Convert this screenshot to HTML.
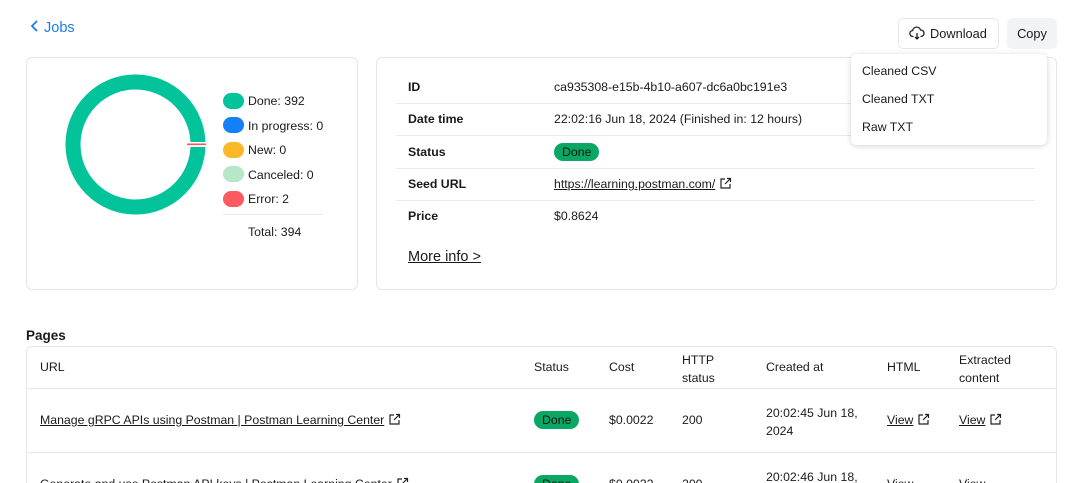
<!DOCTYPE html>
<html><head><style>
*{box-sizing:border-box;margin:0;padding:0}
html,body{width:1080px;height:483px;overflow:hidden}
body{background:#fff;font-family:"Liberation Sans",sans-serif;font-size:12.3px;color:#1a1a1a;position:relative}
.abs{position:absolute}
.card{position:absolute;border:1px solid #e3e6ea;border-radius:6px;background:#fff}
.sw{position:absolute;left:223px;width:21px;height:16px;border-radius:8px}
.lg{position:absolute;left:248px}
.lab{position:absolute;left:408px;font-weight:bold}
.val{position:absolute;left:554px}
.sep{position:absolute;left:396px;width:639px;height:1px;background:#e8ebee}
.badge{display:inline-block;background:#0aa764;color:#111;border-radius:10px;padding:2px 8px;font-size:12.3px}
a{color:#1a1a1a;text-decoration:underline}
.ext{display:inline-block;vertical-align:-2px;margin-left:4px}
.th{position:absolute;font-weight:normal;color:#1a1a1a}
</style></head><body>
<div class="abs" style="left:30px;top:19px;color:#1a7cf0;font-size:14.5px"><svg width="10" height="14" viewBox="0 0 10 14" style="vertical-align:-1px;margin-right:4px"><path d="M7 2L2 7l5 5" fill="none" stroke="#1a7cf0" stroke-width="1.8"/></svg>Jobs</div>

<div class="abs" style="left:898px;top:18px;width:101px;height:31px;border:1px solid #e3e6ea;border-radius:5px;font-size:12.8px;line-height:29px;padding-left:31px">Download</div>
<svg class="abs" style="left:909px;top:26px" width="16" height="15" viewBox="0 0 16 15"><path d="M4.5 10.5H4a3 3 0 0 1-.3-6A4 4 0 0 1 11.5 4a3 3 0 0 1 .5 6.5h-.5M8 7v6M6 11l2 2 2-2" fill="none" stroke="#222" stroke-width="1.3"/></svg>
<div class="abs" style="left:1007px;top:18px;width:50px;height:31px;background:#f1f4f7;border-radius:5px;line-height:31px;text-align:center;font-size:12.8px">Copy</div>

<div class="card" style="left:26px;top:57px;width:332px;height:233px"></div>
<svg class="abs" style="left:65px;top:74px" width="141" height="141" viewBox="0 0 141 141">
<circle cx="70.5" cy="70.5" r="62.5" fill="none" stroke="#03c39b" stroke-width="15"/>
<rect x="122" y="68" width="20" height="5" fill="#fff"/>
<rect x="122" y="69.5" width="20" height="1.6" fill="#f05a5e"/>
</svg>
<div class="sw" style="top:93px;background:#03c39b"></div><div class="lg" style="top:94px">Done: 392</div>
<div class="sw" style="top:117px;background:#1480f7"></div><div class="lg" style="top:119px">In progress: 0</div>
<div class="sw" style="top:142px;background:#fbb828"></div><div class="lg" style="top:143px">New: 0</div>
<div class="sw" style="top:166px;background:#b6e8c8"></div><div class="lg" style="top:168px">Canceled: 0</div>
<div class="sw" style="top:191px;background:#fe5a60"></div><div class="lg" style="top:192px">Error: 2</div>
<div class="abs" style="left:223px;top:214px;width:100px;height:1px;background:#e8ebee"></div>
<div class="abs" style="left:248px;top:225px">Total: 394</div>

<div class="card" style="left:376px;top:57px;width:681px;height:233px"></div>
<div class="lab" style="top:80px">ID</div><div class="val" style="top:80px">ca935308-e15b-4b10-a607-dc6a0bc191e3</div>
<div class="sep" style="top:103px"></div>
<div class="lab" style="top:112px">Date time</div><div class="val" style="top:112px">22:02:16 Jun 18, 2024 (Finished in: 12 hours)</div>
<div class="sep" style="top:135px"></div>
<div class="lab" style="top:145px">Status</div><div class="val" style="top:143px"><span class="badge">Done</span></div>
<div class="sep" style="top:168px"></div>
<div class="lab" style="top:177px">Seed URL</div><div class="val" style="top:177px"><a>https://learning.postman.com/</a><svg class="ext" width="13" height="13" viewBox="0 0 13 13"><path d="M6 2H2v9h9V7M8 1.5h3.5V5M11.5 1.5L6 7" fill="none" stroke="#222" stroke-width="1.2"/></svg></div>
<div class="sep" style="top:200px"></div>
<div class="lab" style="top:209px">Price</div><div class="val" style="top:209px">$0.8624</div>
<div class="abs" style="left:408px;top:249px;font-size:14.5px"><a>More info &gt;</a></div>

<div class="abs" style="left:851px;top:54px;width:196px;height:91px;background:#fff;border-radius:6px;box-shadow:0 1px 6px rgba(0,0,0,.18)"></div>
<div class="abs" style="left:862px;top:64px">Cleaned CSV</div>
<div class="abs" style="left:862px;top:92px">Cleaned TXT</div>
<div class="abs" style="left:862px;top:120px">Raw TXT</div>

<div class="abs" style="left:26px;top:328px;font-weight:bold;font-size:13.5px">Pages</div>
<div class="card" style="left:26px;top:346px;width:1031px;height:160px;border-radius:6px"></div>
<div class="th" style="left:40px;top:360px">URL</div>
<div class="th" style="left:534px;top:360px">Status</div>
<div class="th" style="left:609px;top:360px">Cost</div>
<div class="th" style="left:682px;top:351px;line-height:18px">HTTP<br>status</div>
<div class="th" style="left:766px;top:360px">Created at</div>
<div class="th" style="left:887px;top:360px">HTML</div>
<div class="th" style="left:959px;top:351px;line-height:18px">Extracted<br>content</div>
<div class="abs" style="left:27px;top:388px;width:1029px;height:1px;background:#e3e6ea"></div>
<div class="abs" style="left:40px;top:413px"><a>Manage gRPC APIs using Postman | Postman Learning Center</a><svg class="ext" width="13" height="13" viewBox="0 0 13 13"><path d="M6 2H2v9h9V7M8 1.5h3.5V5M11.5 1.5L6 7" fill="none" stroke="#222" stroke-width="1.2"/></svg></div>
<div class="abs" style="left:534px;top:411px"><span class="badge">Done</span></div>
<div class="abs" style="left:609px;top:413px">$0.0022</div>
<div class="abs" style="left:682px;top:413px">200</div>
<div class="abs" style="left:766px;top:404px;line-height:18px">20:02:45 Jun 18,<br>2024</div>
<div class="abs" style="left:887px;top:413px"><a>View</a><svg class="ext" width="13" height="13" viewBox="0 0 13 13"><path d="M6 2H2v9h9V7M8 1.5h3.5V5M11.5 1.5L6 7" fill="none" stroke="#222" stroke-width="1.2"/></svg></div>
<div class="abs" style="left:959px;top:413px"><a>View</a><svg class="ext" width="13" height="13" viewBox="0 0 13 13"><path d="M6 2H2v9h9V7M8 1.5h3.5V5M11.5 1.5L6 7" fill="none" stroke="#222" stroke-width="1.2"/></svg></div>
<div class="abs" style="left:27px;top:452px;width:1029px;height:1px;background:#e3e6ea"></div>
<div class="abs" style="left:40px;top:477px"><a>Generate and use Postman API keys | Postman Learning Center</a><svg class="ext" width="13" height="13" viewBox="0 0 13 13"><path d="M6 2H2v9h9V7M8 1.5h3.5V5M11.5 1.5L6 7" fill="none" stroke="#222" stroke-width="1.2"/></svg></div>
<div class="abs" style="left:534px;top:475px"><span class="badge">Done</span></div>
<div class="abs" style="left:609px;top:477px">$0.0022</div>
<div class="abs" style="left:682px;top:477px">200</div>
<div class="abs" style="left:766px;top:468px;line-height:18px">20:02:46 Jun 18,<br>2024</div>
<div class="abs" style="left:887px;top:477px"><a>View</a></div>
<div class="abs" style="left:959px;top:477px"><a>View</a></div>
</body></html>
